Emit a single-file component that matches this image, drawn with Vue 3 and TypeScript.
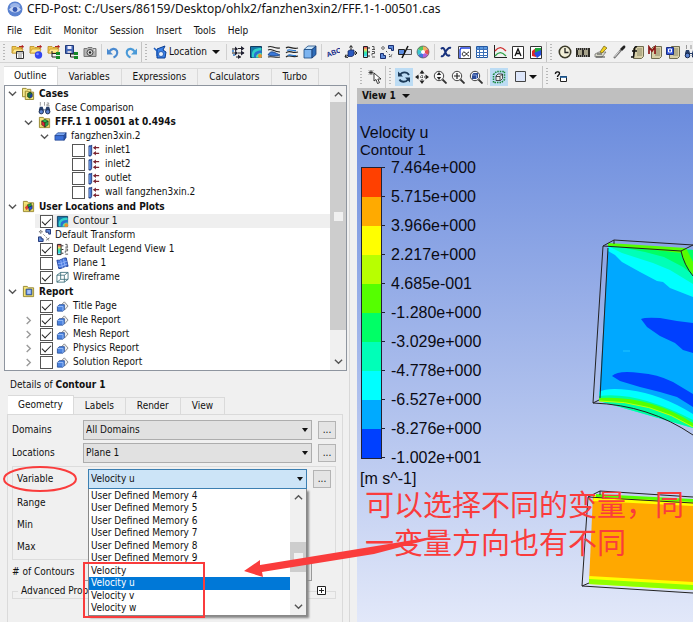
<script setup lang="ts">
import { ref } from 'vue'

interface TreeRow {
  label: string
  level: number
  icon: string
  bold?: boolean
  chevron?: 'open' | 'closed'
  check?: boolean
  selected?: boolean
}

const menus = ['File', 'Edit', 'Monitor', 'Session', 'Insert', 'Tools', 'Help']

const fileTools = ['open-doc', 'open-sphere', 'open-tree', 'save-tree', 'camera']
const historyTools = ['undo', 'redo']
const plotTools = ['vector', 'contour', 'stream', 'particle', 'volume']
const objectTools = ['abc', 'frame', 'legend', 'transform', 'clip', 'wheel']
const dataTools = ['variable', 'expression', 'table', 'chart', 'comment', 'figure']
const extraTools = ['clock', 'film', 'edit', 'probe', 'doc-f', 'doc-m', 'doc-b', 'compare']
const zoomTools = ['pan', 'zoom', 'zoom-in', 'zoom-box']

const mainTabs = ['Outline', 'Variables', 'Expressions', 'Calculators', 'Turbo']
const detailTabs = ['Geometry', 'Labels', 'Render', 'View']

const rows = ref<TreeRow[]>([
  { label: 'Cases', level: 0, icon: 'cases', bold: true, chevron: 'open' },
  { label: 'Case Comparison', level: 1, icon: 'compare' },
  { label: 'FFF.1 1 00501 at 0.494s', level: 1, icon: 'case', bold: true, chevron: 'open' },
  { label: 'fangzhen3xin.2', level: 2, icon: 'domain', chevron: 'open' },
  { label: 'inlet1', level: 3, icon: 'boundary', check: false },
  { label: 'inlet2', level: 3, icon: 'boundary', check: false },
  { label: 'outlet', level: 3, icon: 'boundary', check: false },
  { label: 'wall fangzhen3xin.2', level: 3, icon: 'boundary', check: false },
  { label: 'User Locations and Plots', level: 0, icon: 'plots', bold: true, chevron: 'open' },
  { label: 'Contour 1', level: 1, icon: 'contour', check: true, selected: true },
  { label: 'Default Transform', level: 1, icon: 'transform' },
  { label: 'Default Legend View 1', level: 1, icon: 'legend', check: true },
  { label: 'Plane 1', level: 1, icon: 'plane', check: false },
  { label: 'Wireframe', level: 1, icon: 'wire', check: true },
  { label: 'Report', level: 0, icon: 'report', bold: true, chevron: 'open' },
  { label: 'Title Page', level: 1, icon: 'page', check: true },
  { label: 'File Report', level: 1, icon: 'page', check: true, chevron: 'closed' },
  { label: 'Mesh Report', level: 1, icon: 'page', check: true, chevron: 'closed' },
  { label: 'Physics Report', level: 1, icon: 'page', check: true, chevron: 'closed' },
  { label: 'Solution Report', level: 1, icon: 'page', check: false, chevron: 'closed' },
  { label: '', level: 1, icon: 'page', check: false }
])

const variable = ref('Velocity u')
const options = [
  'User Defined Memory 4',
  'User Defined Memory 5',
  'User Defined Memory 6',
  'User Defined Memory 7',
  'User Defined Memory 8',
  'User Defined Memory 9',
  'Velocity',
  'Velocity u',
  'Velocity v',
  'Velocity w'
]

const legendColors = ['#ff4000', '#ffaa00', '#ffff00', '#b8ff00', '#55ff00', '#00ff66', '#00ffb8', '#00ffff', '#00aaff', '#0040ff']
const legendValues = [
  '7.464e+000', '5.715e+000', '3.966e+000', '2.217e+000', '4.685e-001', '-1.280e+000',
  '-3.029e+000', '-4.778e+000', '-6.527e+000', '-8.276e+000', '-1.002e+001'
]
</script>

<template>
  <div class="app">
    <svg class="defs" aria-hidden="true">
      <defs>
        <symbol id="folder-base" viewBox="0 0 14 14">
          <path d="M1 3V1.500h4l1 1h5V8H1z" fill="#f0c850" stroke="#b98a1c" stroke-width=".8" />
          <path d="M1 8l2-4h9l-2 4z" fill="#ffe88c" stroke="#c79a2a" stroke-width=".8" />
          <path d="M8 1.500h4M10.500 0l2 1.500-1.500 2" fill="none" stroke="#b02020" />
        </symbol>
        <symbol id="open-doc" viewBox="0 0 14 14">
          <use href="#folder-base" />
          <path d="M5.500 6.500h7v7h-7z" fill="#fff" stroke="#333" />
          <path d="M6 8h6M7 10h4M7 12h4" stroke="#888" />
        </symbol>
        <symbol id="open-sphere" viewBox="0 0 14 14">
          <use href="#folder-base" />
          <circle cx="9.500" cy="10" r="3.700" fill="#3346f0" />
          <circle cx="8.500" cy="9" r="1.300" fill="#7d8bff" />
        </symbol>
        <symbol id="open-tree" viewBox="0 0 14 14">
          <use href="#folder-base" />
          <path d="M5 6v6h5M5 8.500h5" fill="none" stroke="#222" />
          <path d="M9 7h4v3H9zM9 11h4v3H9z" fill="#168a28" />
        </symbol>
        <symbol id="save-tree" viewBox="0 0 14 14">
          <path d="M.5 .5h8v8h-8z" fill="#4468b8" stroke="#223a7a" />
          <path d="M2.500 1h4v3h-4z" fill="#eef" />
          <path d="M2.500 6h4v2h-4z" fill="#ccd" />
          <path d="M5.500 8v4h4M5.500 9h4" fill="none" stroke="#222" />
          <path d="M9 7h4v3H9zM9 11h4v3H9z" fill="#168a28" />
        </symbol>
        <symbol id="camera" viewBox="0 0 14 14">
          <path d="M1 3.500h3l1-1h4l1 1h3v8H1z" fill="#b4b4b4" stroke="#777" />
          <circle cx="7" cy="7.500" r="3" fill="#ddd" stroke="#444" />
          <circle cx="7" cy="7.500" r="1.200" fill="#222" />
          <path d="M11 5h1" stroke="#fff" />
        </symbol>
        <symbol id="undo" viewBox="0 0 14 14">
          <path d="M3.500 6.500C5 3.500 9.500 2.500 11 6c1 3-1 5.500-3.500 6.500" fill="none" stroke="#4a8ad0" stroke-width="2.200" />
          <path d="M1 3.500v6h6z" fill="#4a8ad0" />
        </symbol>
        <symbol id="redo" viewBox="0 0 14 14">
          <path d="M10.500 6.500C9 3.500 4.500 2.500 3 6c-1 3 1 5.500 3.500 6.500" fill="none" stroke="#4a9ad8" stroke-width="2.200" />
          <path d="M13 3.500v6H7z" fill="#4a9ad8" />
        </symbol>
        <symbol id="location" viewBox="0 0 14 14">
          <path d="M4 4l8-3-2 4 3 2-1 6H4z" fill="#3b82e8" stroke="#0a3c90" />
          <path d="M1 3l3 3v5" fill="none" stroke="#2060c0" stroke-width="1.500" />
          <circle cx="8" cy="9" r="2.500" fill="#e8f2ff" stroke="#0a3c90" stroke-width=".7" />
        </symbol>
        <symbol id="vector" viewBox="0 0 14 14">
          <path d="M1 4h5M7 3.500h6M1 8h4M7 8h6M5 12h5" stroke="#222" stroke-width="1.200" />
          <path d="M4 1.500L7 4 4 6.500zM10 1l3.500 2.500L10 6zM4 5.500L7 8l-3 2.500zM10 5.500L13.500 8 10 10.500zM7 9.500l3 2.500-3 2z" fill="#223" />
          <path d="M1 6h2M2 10h2" stroke="#3078c8" stroke-width="1.500" />
        </symbol>
        <symbol id="contour" viewBox="0 0 14 14">
          <path d="M1.500 1.500h11v11h-11z" fill="#1678a8" stroke="#123c60" />
          <path d="M3 12.500V9c0-4 3-6 9.500-6v9.500z" fill="#30d0c8" />
          <path d="M5 12.500V10c0-3 3-4.500 7.500-4.500v7z" fill="#2a70d0" />
          <path d="M7 12.500c0-3 2-4.500 5.500-4.500v4.500z" fill="#5ce8a0" />
          <circle cx="11" cy="11" r="2" fill="#e89030" />
        </symbol>
        <symbol id="stream" viewBox="0 0 14 14">
          <path d="M1 2c4-2 5 2 12 1M1 5c4-2 5 2 12 2M1 12c4-1 8 1 12 0" fill="none" stroke="#222" stroke-width="1.100" />
          <path d="M1 10c3-6 7-2 12 0-4 1.500-8 1-12 0z" fill="#3a78d8" stroke="#123c80" stroke-width=".8" />
        </symbol>
        <symbol id="particle" viewBox="0 0 14 14">
          <path d="M1 3c3-3 6 2 12 0M1 8c3-4 6 1 12-1M1 12c3-3 6 1 12-1" fill="none" stroke="#222" stroke-width="1.200" />
          <path d="M2 5.500c3-2 6 1 9 0M3 10.500c2-2 5 1 8 0" fill="none" stroke="#2878d0" stroke-width="1.200" />
        </symbol>
        <symbol id="volume" viewBox="0 0 14 14">
          <path d="M1 4.500L5 1h8l-4 3.500z" fill="#c8e4fc" stroke="#1b4a80" stroke-width=".8" />
          <path d="M1 4.500h8V13H1z" fill="#7cb4f0" stroke="#1b4a80" stroke-width=".8" />
          <path d="M9 4.500L13 1v8.500L9 13z" fill="#2e6cb8" stroke="#1b3a70" stroke-width=".8" />
        </symbol>
        <symbol id="abc" viewBox="0 0 14 14">
          <text x="0" y="10" transform="rotate(-20 7 7)" font-size="7" font-weight="bold" font-family="Liberation Sans, sans-serif" fill="#152a88">ABC</text>
        </symbol>
        <symbol id="frame" viewBox="0 0 14 14">
          <path d="M7 6V1M7 8L1 12M8 8h5M5.500 2.500L7 .5l1.500 2M2 9.500L1 12l3 .5M11 6l2 2-2 2" fill="none" stroke="#222" />
          <path d="M4 6l2-1h4v5l-2 1.500H4z" fill="#2858c0" stroke="#101c50" stroke-width=".7" />
        </symbol>
        <linearGradient id="rainbow" x1="0" y1="0" x2="0" y2="1">
          <stop offset="0" stop-color="#e02060" />
          <stop offset=".3" stop-color="#f0e060" />
          <stop offset=".55" stop-color="#30e8a0" />
          <stop offset=".8" stop-color="#30d0e8" />
          <stop offset="1" stop-color="#e8f8ff" />
        </linearGradient>
        <symbol id="legend" viewBox="0 0 14 14">
          <path d="M1.500 1.500h4v11h-4z" fill="url(#rainbow)" stroke="#222" />
          <path d="M6 3h2M6 7h2M6 11h2" stroke="#222" />
          <path d="M10 1.500h2v3M10 4.500h3M10 6.500h2.500v2H10v2M10 12h3" fill="none" stroke="#555" />
        </symbol>
        <symbol id="transform" viewBox="0 0 14 14">
          <path d="M8.500 .5h5v5h-2v-2h-3z" fill="#5f8bd8" stroke="#1b2f70" />
          <path d="M.5 8.500h3v2h2v3h-5z" fill="#5f8bd8" stroke="#1b2f70" />
          <path d="M1 3h4M3 1v4M6 6l2 2M9 9l3 4M9 12l4-3" stroke="#444" stroke-dasharray="1.500 1" />
        </symbol>
        <symbol id="clip" viewBox="0 0 14 14">
          <path d="M.5 4.500h6v5h-6z" fill="#5c8ce0" stroke="#222" />
          <path d="M9 4.500h4.500v5H7" fill="#d8e0f0" stroke="#555" />
          <path d="M4 13l6-12" stroke="#111" stroke-width="1.500" />
        </symbol>
        <symbol id="wheel" viewBox="0 0 14 14">
          <path d="M7 7V1a6 6 0 0 1 5.200 3z" fill="#f0b060" />
          <path d="M7 7l5.200-3a6 6 0 0 1 0 6z" fill="#e85050" />
          <path d="M7 7l5.200 3A6 6 0 0 1 7 13z" fill="#b060d8" />
          <path d="M7 7v6a6 6 0 0 1-5.200-3z" fill="#4078e0" />
          <path d="M7 7l-5.200 3a6 6 0 0 1 0-6z" fill="#38c8d0" />
          <path d="M7 7L1.800 4A6 6 0 0 1 7 1z" fill="#50c860" />
          <circle cx="7" cy="7" r="2" fill="#fff" />
          <circle cx="7" cy="7" r="6" fill="none" stroke="#555" stroke-width=".7" />
        </symbol>
        <symbol id="variable" viewBox="0 0 14 14">
          <path d="M2 4c2-2 3-1 4 2s2 6 5 4M12 3C9 2 7 6 6 8s-2 4-4 3" fill="none" stroke="#16307c" stroke-width="2" />
        </symbol>
        <symbol id="expression" viewBox="0 0 14 14">
          <path d="M1.500 1.500h12v12h-12z" fill="#fff" stroke="#444" />
          <path d="M3 13V5l1-2h9" fill="none" stroke="#2040e0" stroke-width="1.400" />
          <path d="M12 7c-2 0-3 4-5 4-2.500 0-2-4 0-4s3 4 5 4" fill="none" stroke="#222" />
        </symbol>
        <symbol id="table" viewBox="0 0 14 14">
          <path d="M1.500 1.500h11v11h-11z" fill="#fff" stroke="#2458a0" />
          <path d="M2 2h10v2H2z" fill="#5a98e0" />
          <path d="M1 4.500h12M1 7.500h12M1 10.500h12M4.500 2v11M8.500 2v11" stroke="#3c70b8" />
        </symbol>
        <symbol id="chart" viewBox="0 0 14 14">
          <path d="M1.500 0v12.500H14" fill="none" stroke="#222" />
          <path d="M2 6c4-5 7-4 11 0" fill="none" stroke="#d03030" stroke-width="1.400" />
          <path d="M2 11c4-5 7-4 11 0" fill="none" stroke="#30a048" stroke-width="1.400" />
        </symbol>
        <symbol id="comment" viewBox="0 0 14 14">
          <path d="M1.500 1.500h11v12h-11z" fill="#fff" stroke="#333" />
          <path d="M4 11l3-7 3 7M5 8.500h4" fill="none" stroke="#111" stroke-width="1.300" />
        </symbol>
        <symbol id="figure" viewBox="0 0 14 14">
          <path d="M1.500 1.500h11v12h-11z" fill="#fff" stroke="#333" />
          <path d="M3 6l4-3v9l-4-1z" fill="#e02828" />
          <path d="M6 3h6v5H6z" fill="#20a840" />
          <path d="M5 8l7-3v5l-4 3z" fill="#2850e0" />
        </symbol>
        <symbol id="clock" viewBox="0 0 14 14">
          <circle cx="7" cy="7" r="5.700" fill="#f2efd8" stroke="#3c3a28" stroke-width="1.600" />
          <path d="M7 3v4.500h3.500" fill="none" stroke="#222" stroke-width="1.300" />
        </symbol>
        <symbol id="film" viewBox="0 0 14 14">
          <path d="M0 3h14v9H0z" fill="#2c2a24" />
          <path d="M2 5h4v5H2zM8 5h4v5H8z" fill="#a8a48c" />
          <path d="M1 4h12M1 11h12" stroke="#ddd" stroke-dasharray="1 1" />
        </symbol>
        <symbol id="edit" viewBox="0 0 14 14">
          <path d="M1 9l4-2h7l-4 5H1z" fill="#d8d8c8" stroke="#666" stroke-width=".7" />
          <path d="M3 9h5M2 12h9" stroke="#444" />
          <path d="M6 7l4-6 3 2-5 5z" fill="#f0d020" stroke="#706010" stroke-width=".7" />
        </symbol>
        <symbol id="probe" viewBox="0 0 14 14">
          <path d="M2 13l7-8" stroke="#777" stroke-width="2" />
          <path d="M2.500 12l5-6" stroke="#eee" stroke-width=".8" />
          <path d="M8 4l3-3c2-1 3 0 2 2l-3 3z" fill="#222" />
        </symbol>
        <symbol id="doc-base" viewBox="0 0 14 14">
          <path d="M5.500 1.500h8v10l-2 2h-8v-10z" fill="#d8d0a8" stroke="#706c50" />
          <path d="M7 4h5M7 6h5M7 8h5M7 10h5" stroke="#8c8868" />
        </symbol>
        <symbol id="doc-f" viewBox="0 0 14 14">
          <use href="#doc-base" />
          <path d="M7 2C5 1 4.500 3 4.500 5L3.500 12H1M2 6h5" fill="none" stroke="#111" stroke-width="1.600" />
        </symbol>
        <symbol id="doc-m" viewBox="0 0 14 14">
          <use href="#doc-base" />
          <path d="M1 9V2l3 4 3-4v7" fill="none" stroke="#8c1818" stroke-width="1.700" />
        </symbol>
        <symbol id="doc-b" viewBox="0 0 14 14">
          <use href="#doc-base" />
          <path d="M.5 2.500h7v7h-7z" fill="#3858d8" stroke="#182c80" />
          <path d="M2.500 7V4h3v3z" fill="none" stroke="#fff" />
        </symbol>
        <symbol id="compare" viewBox="0 0 14 14">
          <path d="M2.500 0v4M7 0v4M9.500 1h2v1.500h-2V4h3" fill="none" stroke="#999" />
          <path d="M1 8l1-3h3l1 3h2l1-3h3l1 3v3H8V9H6v2H1z" fill="#28406c" />
          <circle cx="3.500" cy="10.500" r="2.300" fill="#5c84d0" stroke="#18284c" />
          <circle cx="10.500" cy="10.500" r="2.300" fill="#5c84d0" stroke="#18284c" />
        </symbol>
        <symbol id="pointer" viewBox="0 0 14 14">
          <path d="M3 0v5M.5 2.500h5M1 .5l4 4M5 .5l-4 4" stroke="#222" stroke-width=".8" />
          <path d="M6 3v8l2-1.500 1.500 4 2-.8-1.700-3.700H13z" fill="#fff" stroke="#222" stroke-width=".9" />
        </symbol>
        <symbol id="rotate" viewBox="0 0 14 14">
          <path d="M3 5c2-3.500 7-3.500 9 0M11 9.500c-2 3-7 3-8.500 0" fill="none" stroke="#1c3a58" stroke-width="1.800" />
          <path d="M1 1.500v5h5zM13 12.500v-5H8z" fill="#1c3a58" />
        </symbol>
        <symbol id="pan" viewBox="0 0 14 14">
          <path d="M7 0l2.500 3.500h-5zM7 14l2.500-3.500h-5zM0 7l3.500-2.500v5zM14 7l-3.500-2.500v5z" fill="#222" />
          <path d="M7 3v8M3 7h8" stroke="#222" stroke-dasharray="1 1" />
        </symbol>
        <symbol id="lens" viewBox="0 0 14 14">
          <circle cx="6" cy="6" r="4.700" fill="#f8f8f8" stroke="#444" stroke-width="1" />
          <path d="M9.500 9.500l4 4" stroke="#333" stroke-width="1.800" />
        </symbol>
        <symbol id="zoom" viewBox="0 0 14 14">
          <use href="#lens" />
          <path d="M6 2l2.200 3H3.800zM6 10l2.200-3H3.800z" fill="#222" />
        </symbol>
        <symbol id="zoom-in" viewBox="0 0 14 14">
          <use href="#lens" />
          <path d="M6 3v6M3 6h6" stroke="#222" stroke-width="1.200" />
        </symbol>
        <symbol id="zoom-box" viewBox="0 0 14 14">
          <use href="#lens" />
          <path d="M3 4.500L4.500 3H9v4.500L7.500 9H3z" fill="#2c4c98" />
          <path d="M3 5h4.500v4" fill="none" stroke="#a8bce8" stroke-width=".7" />
        </symbol>
        <symbol id="fit" viewBox="0 0 14 14">
          <path d="M1.500 4.500l3-3h8v8l-3 3h-8z" fill="none" stroke="#18883c" stroke-width="1.500" stroke-dasharray="1.500 1" />
          <path d="M4 6l2-2h4.500v4.500L8.500 10.500H4z" fill="#eee" stroke="#222" stroke-width=".8" />
          <path d="M4 6.500h4v4M8 6.500L10.500 4" fill="none" stroke="#222" stroke-width=".8" />
        </symbol>
        <symbol id="swatch" viewBox="0 0 14 14">
          <path d="M2.500 1.500h10v10h-10z" fill="#dde6fa" stroke="#444" />
        </symbol>
        <symbol id="what" viewBox="0 0 14 14">
          <path d="M1.500 4C1 1.500 5.500 1 5.500 3.500 5.500 5 3.500 5 3.500 7M3.500 8v1.500" fill="none" stroke="#111" stroke-width="1.400" />
          <path d="M6.500 6.500h6v5h-6z" fill="#fff" stroke="#222" />
          <path d="M6 7h7" stroke="#1c5c9c" stroke-width="1.600" />
        </symbol>
        <symbol id="yellow" viewBox="0 0 14 14">
          <path d="M1.500 3V1.500h4L7 3h5.500v9.500h-11z" fill="#f4e478" stroke="#94842c" />
          <path d="M3 4.500h9v7.500H3z" fill="#e4d468" />
        </symbol>
        <symbol id="tricube" viewBox="0 0 14 14">
          <path d="M4 5.500l3.500-2 3.500 2-3.500 2z" fill="#28b848" stroke="#111" stroke-width=".5" />
          <path d="M4 5.500l3.500 2V12L4 9.500z" fill="#e02838" stroke="#111" stroke-width=".5" />
          <path d="M11 5.500l-3.500 2V12L11 9.500z" fill="#28a848" stroke="#111" stroke-width=".5" />
        </symbol>
        <symbol id="case" viewBox="0 0 14 14">
          <use href="#yellow" />
          <use href="#tricube" />
        </symbol>
        <symbol id="cases" viewBox="0 0 14 14">
          <path d="M.5 1.500h4l1 1h4v8h-9z" fill="#f4e890" stroke="#94842c" />
          <path d="M3.500 4.500h3l1 1h5v8h-9z" fill="#ece07c" stroke="#94842c" />
          <path d="M6 7l2.500-1.500L11 7v3.500L8.500 12 6 10.500z" fill="#187838" stroke="#111" stroke-width=".6" />
          <path d="M8.500 8.500V12L11 10.500V7z" fill="#203ca0" />
        </symbol>
        <symbol id="plots" viewBox="0 0 14 14">
          <use href="#yellow" />
          <path d="M3 8l3-3 2 2-3 4z" fill="#e04030" />
          <path d="M6 5l4-1.500v4L7 8z" fill="#20b040" stroke="#111" stroke-width=".5" />
          <path d="M7 8l4-2v3l-3 3z" fill="#2850d8" stroke="#111" stroke-width=".5" />
        </symbol>
        <symbol id="report" viewBox="0 0 14 14">
          <use href="#yellow" />
          <path d="M4.500 4.500h6v6h-6z" fill="#78a0f0" stroke="#244890" />
          <path d="M6 6.500h3M6 8.500h3" stroke="#dce8ff" />
        </symbol>
        <symbol id="domain" viewBox="0 0 14 14">
          <path d="M1 6l3-3h9l-2 3z" fill="#78a4f0" stroke="#1c3c88" stroke-width=".7" />
          <path d="M1 6h10v5H1z" fill="#3c70d8" stroke="#1c3c88" stroke-width=".7" />
          <path d="M11 6l2-3v5l-2 3z" fill="#2450a8" stroke="#1c3c88" stroke-width=".7" />
        </symbol>
        <symbol id="boundary" viewBox="0 0 14 14">
          <path d="M1 2h2l1-1v10l-1 2H1z" fill="#3468c8" stroke="#142c6c" stroke-width=".8" />
          <path d="M2 3v9" stroke="#88b0f0" />
          <path d="M6 4h6M6 10h6" stroke="#7c2430" stroke-width="1.300" />
          <path d="M8.500 1.500v5L5.500 4zM8.500 7.500v5l-3-2.500z" fill="#7c2430" />
        </symbol>
        <symbol id="plane" viewBox="0 0 14 14">
          <path d="M1 3.500c4 1 6-3 10-2.500l2 9c-4-1-6 3-10 2.500z" fill="#4c7ce0" stroke="#1c3c98" />
          <path d="M2 7c4 1 6-2 10-2.500M2.500 10c4 1 6-2 10-2.500M5 3.500l2 8M8 2l2 9" fill="none" stroke="#a8c4ff" stroke-width=".7" />
        </symbol>
        <symbol id="wire" viewBox="0 0 14 14">
          <path d="M1 4.500h8V12H1zM5 1.500h8V9H5zM1 4.500l4-3M9 4.500l4-3M9 12l4-3M1 12l4-3" fill="none" stroke="#386c78" stroke-width=".9" />
        </symbol>
        <symbol id="page" viewBox="0 0 14 14">
          <path d="M6 5l3-3 4 4.500L9 11" fill="#eee" stroke="#777" stroke-width=".9" />
          <path d="M1.500 7l2-2H9v5.500L7.500 12h-6z" fill="#4c84e0" stroke="#1c448c" stroke-width=".8" />
          <path d="M1.500 7h6v5" fill="none" stroke="#b0ccf8" stroke-width=".8" />
        </symbol>
      </defs>
    </svg>

    <header class="titlebar">
      <svg class="logo" viewBox="0 0 16 16">
        <circle cx="8" cy="8" r="7.500" fill="#5a82d0" />
        <ellipse cx="8" cy="5" rx="5" ry="3" fill="#9ab4e8" />
        <path d="M2 8.500c3-4 9-4 12 0-3 4-9 4-12 0z" fill="#c8d6f4" />
        <circle cx="8" cy="8.500" r="2.400" fill="#3558b0" />
      </svg>
      <h1>CFD-Post: C:/Users/86159/Desktop/ohlx2/fanzhen3xin2/FFF.1-1-00501.cas</h1>
    </header>

    <nav class="menubar">
      <button v-for="m in menus" :key="m" type="button">{{ m }}</button>
    </nav>

    <div class="toolbar main-tools">
      <i class="grip"></i>
      <button v-for="t in fileTools" :key="t" type="button" class="tool" :aria-label="t"><svg><use :href="'#' + t" /></svg></button>
      <i class="sep"></i>
      <button v-for="t in historyTools" :key="t" type="button" class="tool" :aria-label="t"><svg><use :href="'#' + t" /></svg></button>
      <i class="end"></i><i class="grip"></i>
      <button type="button" class="location">
        <svg><use href="#location" /></svg>Location<b class="caret"></b>
      </button>
      <i class="sep"></i>
      <button v-for="t in plotTools" :key="t" type="button" class="tool" :aria-label="t"><svg><use :href="'#' + t" /></svg></button>
      <i class="sep"></i>
      <button v-for="t in objectTools" :key="t" type="button" class="tool" :aria-label="t"><svg><use :href="'#' + t" /></svg></button>
      <i class="sep"></i>
      <button v-for="t in dataTools" :key="t" type="button" class="tool" :aria-label="t"><svg><use :href="'#' + t" /></svg></button>
      <i class="end"></i><i class="grip"></i>
      <button v-for="t in extraTools" :key="t" type="button" class="tool" :aria-label="t"><svg><use :href="'#' + t" /></svg></button>
    </div>

    <div class="body">
      <aside class="side">
        <div class="tabs main-tabs">
          <button v-for="(t, i) in mainTabs" :key="t" type="button" :class="{ active: i === 0 }">{{ t }}</button>
        </div>

        <div class="tree">
          <ul>
            <li v-for="(r, i) in rows" :key="i" :class="['row', 'l' + r.level, { group: r.level === 0 }]">
              <span class="twist">
                <svg v-if="r.chevron === 'open'" viewBox="0 0 10 10"><path d="M1 3l4 4 4-4" stroke="#555" /></svg>
                <svg v-else-if="r.chevron === 'closed'" viewBox="0 0 10 10"><path d="M3 1l4 4-4 4" stroke="#999" /></svg>
              </span>
              <label :class="['node', { selected: r.selected, bold: r.bold }]">
                <input v-if="r.check !== undefined" v-model="r.check" type="checkbox" />
                <svg><use :href="'#' + r.icon" /></svg>
                <span>{{ r.label }}</span>
              </label>
            </li>
          </ul>
          <div class="scroll">
            <svg viewBox="0 0 10 10"><path d="M1 7l4-4 4 4" /></svg>
            <div class="thumb"><i></i></div>
            <svg viewBox="0 0 10 10"><path d="M1 3l4 4 4-4" /></svg>
          </div>
        </div>

        <h2>Details of <b>Contour 1</b></h2>

        <div class="tabs detail-tabs">
          <button v-for="(t, i) in detailTabs" :key="t" type="button" :class="{ active: i === 0 }">{{ t }}</button>
        </div>

        <form class="panel" @submit.prevent>
          <div class="field">
            <label for="domains">Domains</label>
            <div class="combo">
              <select id="domains"><option>All Domains</option></select><b class="caret"></b>
            </div>
            <button type="button" class="more">...</button>
          </div>
          <div class="field">
            <label for="locations">Locations</label>
            <div class="combo">
              <select id="locations"><option>Plane 1</option></select><b class="caret"></b>
            </div>
            <button type="button" class="more">...</button>
          </div>

          <div class="group-box">
            <div class="field">
              <label for="variable">Variable
                <svg class="ring" viewBox="0 0 76 28"><ellipse cx="38" cy="14" rx="36" ry="12" /></svg>
              </label>
              <div class="combo open">
                <select id="variable" v-model="variable"><option v-for="o in options" :key="o">{{ o }}</option></select><b class="caret"></b>
                <div class="popup">
                  <ul role="listbox">
                    <li v-for="o in options" :key="o" role="option" :class="{ on: o === variable }" @click="variable = o">{{ o }}</li>
                  </ul>
                  <div class="scroll">
                    <svg viewBox="0 0 10 10"><path d="M1 7l4-4 4 4" /></svg>
                    <div class="thumb"><i></i></div>
                    <svg viewBox="0 0 10 10"><path d="M1 3l4 4 4-4" /></svg>
                  </div>
                  <div class="mark"></div>
                </div>
              </div>
              <button type="button" class="more">...</button>
            </div>
            <div class="plain">Range</div>
            <div class="plain">Min</div>
            <div class="plain">Max</div>
          </div>

          <div class="field contours">
            <label for="count"># of Contours</label>
            <input id="count" type="number" />
          </div>
          <fieldset>
            <legend>Advanced Properties</legend>
            <button type="button" class="expand" aria-label="Expand">
              <svg viewBox="0 0 9 9"><path d="M.5 .5h8v8h-8zM2 4.500h5M4.500 2v5" /></svg>
            </button>
          </fieldset>
        </form>
      </aside>

      <main class="viewer">
        <div class="toolbar view-tools">
          <i class="grip"></i>
          <button type="button" class="tool" aria-label="Select"><svg><use href="#pointer" /></svg></button>
          <i class="end"></i><i class="grip"></i>
          <button type="button" class="tool on" aria-label="Rotate"><svg><use href="#rotate" /></svg></button>
          <button v-for="t in zoomTools" :key="t" type="button" class="tool" :aria-label="t"><svg><use :href="'#' + t" /></svg></button>
          <i class="sep"></i>
          <button type="button" class="tool on" aria-label="Fit view"><svg><use href="#fit" /></svg></button>
          <button type="button" class="layout" aria-label="Viewport layout"><svg><use href="#swatch" /></svg><b class="caret"></b></button>
          <i class="end"></i><i class="grip"></i>
          <button type="button" class="tool" aria-label="Context help"><svg><use href="#what" /></svg></button>
        </div>
        <button type="button" class="view-name">View 1 <b class="caret"></b></button>

        <section class="canvas">
          <svg class="model" viewBox="357 104 336 518">
            <g>
              <path d="M608 246L693 250V427L680 417 650 406 627 402 599 401z" fill="#00a8ff" />
              <path d="M608 244L693 250V297L670 288 663 282 657 281 640 272 622 262 615 255 608 251z" fill="#00ffff" />
              <path d="M608 246L693 250V284L670 270 653 263 622 253z" fill="#00ffb8" />
              <path d="M610 245L693 250V275L683 267 664 257 645 252z" fill="#00ff66" />
              <path d="M608 243L686 248 693 262V275L685 263 681 253 655 250 608 246z" fill="#55ff00" />
              <path d="M641 319q4-2 19-1l17 3 16 2v30l-10-3-8-7-15-7-13-9z" fill="#0040ff" />
              <path d="M612 376q6-6 28-3 17 1 33 9l20 12v13l-16-10-17-5-20-5-20-6z" fill="#0040ff" />
              <path d="M623 351h7" stroke="#20c4ff" />
              <path d="M599 392q8-5 30-2 32 4 64 24v14L599 401z" fill="#00ffff" />
              <path d="M599 396q38-5 94 24v8L599 401z" fill="#00ffa0" />
              <path d="M599 398q50-3 94 25v4q-42-26-94-26z" fill="#55ff00" />
              <path d="M599 401q52 0 94 26" fill="none" stroke="#c8ff00" />
            </g>
            <path d="M603 246L593 403M608 248L600 398M603 246L614 240 693 245 681 251zM614 240v4M681 251q3 14 12 25M593 403l6-3M593 403q56 2 100 32" class="edge" />

            <path d="M593 495L693 502V588L589 583z" fill="#ffa800" />
            <path d="M594 495L693 500V506L593 501z" fill="#ffff00" />
            <path d="M596 494L693 499V502L596 497z" fill="#55ff00" />
            <path d="M589 576L693 582V590L589 584z" fill="#ffff00" />
            <path d="M589 579L693 585V590L589 584z" fill="#90ff00" />
            <path d="M588 497L582 586 693 593M588 497L693 503M588 497L600 491 693 497M600 491v4M582 586l7-3" class="edge" />
          </svg>

          <div class="legend">
            <div class="legend-title">Velocity u</div>
            <div class="legend-sub">Contour 1</div>
            <div class="legend-body">
              <div class="bar">
                <i v-for="c in legendColors" :key="c" :style="{ background: c }"></i>
              </div>
              <ol>
                <li v-for="v in legendValues" :key="v">{{ v }}</li>
              </ol>
            </div>
            <div class="legend-unit">[m s^-1]</div>
          </div>

          <p class="note">可以选择不同的变量，同<br />一变量方向也有不同</p>
          <svg class="arrow" viewBox="0 0 206 54">
            <path d="M0 41L16 30V35L206 4 130 24 18 42 19 47z" />
          </svg>
        </section>
      </main>
    </div>
  </div>
</template>

<style>
html,
body {
  margin: 0;
  background: #f0f0f0;
}
</style>

<style scoped>
* {
  box-sizing: border-box;
}

.app {
  display: flex;
  flex-direction: column;
  height: 100vh;
  overflow: hidden;
  background: #f0f0f0;
  color: #111;
  font: 10px/14px "DejaVu Sans Condensed", "DejaVu Sans", sans-serif;
}

.defs {
  position: absolute;
  width: 0;
  height: 0;
}

button,
select,
input {
  font: inherit;
  color: inherit;
}

button {
  margin: 0;
  padding: 0;
  border: 0;
  background: none;
  white-space: nowrap;
}

ul,
ol {
  margin: 0;
  padding: 0;
  list-style: none;
}

.caret {
  flex: none;
  border: 3px solid transparent;
  border-top: 4px solid #111;
  border-bottom: 0;
}

.titlebar {
  display: flex;
  align-items: center;
  gap: 4px;
  height: 18px;
  padding-left: 7px;
  background: #fff;
}

.logo {
  width: 16px;
  height: 16px;
}

h1 {
  margin: 0;
  font: 12px/18px "Noto Sans", "Open Sans", sans-serif;
  white-space: nowrap;
}

.menubar {
  display: flex;
  align-items: center;
  gap: 12px;
  height: 23px;
  padding: 3px 7px 0;
  background: #fff;
}

.toolbar {
  display: flex;
  flex: none;
  align-items: center;
  overflow: hidden;
}

.main-tools {
  height: 22px;
  border-top: 1px solid #e2e2e2;
  border-bottom: 1px solid #d4d4d4;
}

.toolbar svg {
  width: 14px;
  height: 14px;
}

.tool {
  display: flex;
  flex: none;
  align-items: center;
  justify-content: center;
  width: 18px;
  height: 18px;
}

.tool.on {
  background: #bcdcf4;
}

.grip {
  flex: none;
  width: 9px;
  height: 17px;
  background: linear-gradient(#b8b8b8 50%, transparent 50%) 3px 0 / 2px 3px repeat-y;
}

.sep {
  flex: none;
  width: 5px;
  height: 16px;
  background: linear-gradient(#d0d0d0, #d0d0d0) 2px 0 / 1px 100% no-repeat;
}

.end {
  flex: none;
  width: 2px;
  height: 22px;
  background: linear-gradient(#c4c4c4, #c4c4c4) 1px 0 / 1px 100% no-repeat;
}

.location {
  display: flex;
  flex: none;
  align-items: center;
  gap: 2px;
  width: 73px;
  height: 18px;
  padding: 0 4px 0 2px;
}

.location .caret,
.layout .caret {
  border-width: 4px 4px 0;
}

.location .caret {
  margin-left: auto;
}

.body {
  display: flex;
  flex: 1;
  gap: 7px;
  min-height: 0;
}

.side {
  display: flex;
  flex: none;
  flex-direction: column;
  width: 350px;
  padding: 3px 2px 0 4px;
  border-right: 1px solid #d8d8d8;
}

.tabs {
  display: flex;
  align-items: flex-end;
}

.tabs button {
  height: 17px;
  padding: 0 11px;
  border: 1px solid #dadada;
  border-bottom: 0;
  border-left: 0;
}

.tabs .active {
  height: 19px;
  padding: 0 10px;
  background: #fff;
}

.tree {
  display: flex;
  flex: none;
  height: 286px;
  overflow: hidden;
  border: 1px solid #8e959f;
  background: #fff;
}

.tree ul {
  flex: 1;
}

.row {
  display: flex;
  height: 14px;
}

.row.group {
  height: 15px;
}

.l1 {
  padding-left: 16px;
}

.l2 {
  padding-left: 32px;
}

.l3 {
  padding-left: 48px;
}

.twist {
  flex: none;
  display: flex;
  align-items: center;
  justify-content: center;
  width: 14px;
}

.twist svg,
.scroll svg {
  flex: none;
  width: 9px;
  height: 9px;
  fill: none;
  stroke-width: 1.5;
}

.node {
  display: flex;
  flex: 1;
  align-items: center;
  gap: 3px;
  padding-left: 3px;
  white-space: nowrap;
}

.node svg {
  flex: none;
  width: 13px;
  height: 13px;
}

.node span {
  padding-left: 1px;
}

.node.selected {
  background: #efefef;
}

.bold {
  font-weight: bold;
}

.node input {
  flex: none;
  appearance: none;
  width: 13px;
  height: 13px;
  margin: 0 0 0 2px;
  border: 1px solid #555;
  background: #fff;
}

.node input:checked::before {
  content: "";
  display: block;
  width: 8px;
  height: 4px;
  margin: 2px 0 0 1px;
  border: solid #222;
  border-width: 0 0 1px 1px;
  transform: rotate(-45deg);
}

.scroll {
  display: flex;
  flex: none;
  flex-direction: column;
  align-items: center;
  width: 16px;
  padding: 4px 0;
  background: #f0f0f0;
}

.scroll svg {
  stroke: #555;
}

.scroll .thumb {
  display: flex;
  align-items: center;
  justify-content: center;
  width: 100%;
  background: #cdcdcd;
}

.scroll .thumb i {
  width: 9px;
  height: 9px;
  background: #f0f0f0;
}

.tree .thumb {
  height: 228px;
  margin: 3px 0 auto;
}

h2 {
  margin: 7px 0 3px 6px;
  font: inherit;
}

.detail-tabs {
  padding-left: 4px;
}

.panel {
  flex: 1;
  margin: 0 4px 0 3px;
  padding: 5px 6px 0 4px;
  border: 1px solid #dadada;
  border-bottom: 0;
}

.field {
  display: flex;
  align-items: center;
  height: 20px;
  margin-bottom: 3px;
}

.field label {
  flex: none;
  width: 71px;
}

.combo {
  position: relative;
  display: flex;
  flex: 1;
  align-items: center;
  height: 20px;
}

.combo select {
  width: 100%;
  height: 20px;
  padding: 0 2px;
  appearance: none;
  border: 1px solid #adadad;
  border-radius: 0;
  background: #e1e1e1;
}

.combo .caret {
  position: absolute;
  right: 4px;
  pointer-events: none;
}

.combo.open select {
  border-color: #3c7fb1;
  background: #cce4f7;
}

.more {
  width: 18px;
  height: 18px;
  margin-left: 6px;
  border: 1px solid #b4b4b4;
  background: #e4e4e4;
  line-height: 14px;
}

.group-box {
  height: 94px;
  padding: 2px 4px;
  border: 1px solid #dcdcdc;
}

.plain {
  height: 22px;
  line-height: 22px;
}

.group-box label {
  position: relative;
}

.ring {
  position: absolute;
  left: -15px;
  top: -7px;
  width: 76px;
  height: 28px;
  fill: none;
  stroke: #fa3c3c;
  stroke-width: 2;
}

.popup {
  position: absolute;
  z-index: 2;
  left: 0;
  right: 0;
  top: 20px;
  display: flex;
  border: 1px solid #888;
  border-top: 0;
  background: #fff;
  box-shadow: 2px 2px 2px #888;
}

.popup ul {
  flex: 1;
  padding-top: 1px;
}

.popup li {
  height: 12px;
  padding-left: 2px;
  line-height: 12px;
}

.popup li:nth-child(even) {
  height: 13px;
}

.popup li.on {
  background: #0078d7;
  color: #fff;
}

.popup .thumb {
  height: 30px;
  margin: auto 0 30px;
}

.mark {
  position: absolute;
  left: -6px;
  bottom: -3px;
  width: 122px;
  height: 56px;
  border: 2px solid #fa3c3c;
}

.contours {
  margin: 2px 24px 0 0;
}

.contours input {
  flex: 1;
  min-width: 0;
  height: 18px;
  border: 1px solid #999;
  background: #eee;
}

fieldset {
  position: relative;
  height: 15px;
  margin: 2px 0 0;
  padding: 0 5px;
  border: 1px solid #dcdcdc;
}

fieldset legend {
  padding: 0 3px;
}

.expand {
  position: absolute;
  right: 9px;
  top: -12px;
  width: 9px;
  height: 9px;
  background: #fff;
}

.expand svg {
  display: block;
  width: 9px;
  height: 9px;
  fill: none;
  stroke: #222;
}

.viewer {
  display: flex;
  flex: 1;
  flex-direction: column;
  min-width: 0;
}

.view-tools {
  height: 25px;
  padding-top: 2px;
}

.layout {
  display: flex;
  align-items: center;
  justify-content: center;
  gap: 2px;
  width: 33px;
}

.view-name {
  display: flex;
  flex: none;
  align-items: center;
  gap: 6px;
  height: 16px;
  padding-left: 5px;
  background: #bfbfbf;
  font-weight: bold;
}

.view-name .caret {
  border-width: 4px 4px 0;
}

.canvas {
  position: relative;
  flex: 1;
  background: linear-gradient(#6a8bdd, #e2e8f9);
}

.model {
  position: absolute;
  left: 0;
  top: 0;
  width: 336px;
  height: 518px;
}

.edge {
  fill: none;
  stroke: #222;
  stroke-width: 1;
}

.legend {
  padding: 20px 0 0 3px;
  color: #0b0b14;
  font-family: "Liberation Sans", Arial, sans-serif;
}

.legend-title {
  font-size: 16px;
  line-height: 18px;
}

.legend-sub {
  font-size: 15px;
  line-height: 15px;
}

.legend-body {
  display: flex;
  margin: 10px 0 11px 1px;
}

.bar {
  display: flex;
  flex-direction: column;
  width: 21px;
  border: 1px solid #223;
}

.bar i {
  height: 29px;
}

.legend-body ol {
  margin: -14px 0;
}

.legend-body li {
  display: flex;
  align-items: center;
  gap: 6px;
  height: 29px;
  font-size: 16px;
}

.legend-body li::before {
  content: "";
  width: 3px;
  height: 1px;
  background: #223;
}

.legend-unit {
  font-size: 16px;
  line-height: 18px;
}

.note {
  position: absolute;
  left: 8px;
  top: 380px;
  margin: 0;
  color: #fa3c3c;
  font: 29px/38px "Noto Sans CJK SC", sans-serif;
  white-space: nowrap;
}

.arrow {
  position: absolute;
  z-index: 3;
  left: -113px;
  top: 426px;
  width: 206px;
  height: 54px;
  fill: #fa3c3c;
}
</style>
